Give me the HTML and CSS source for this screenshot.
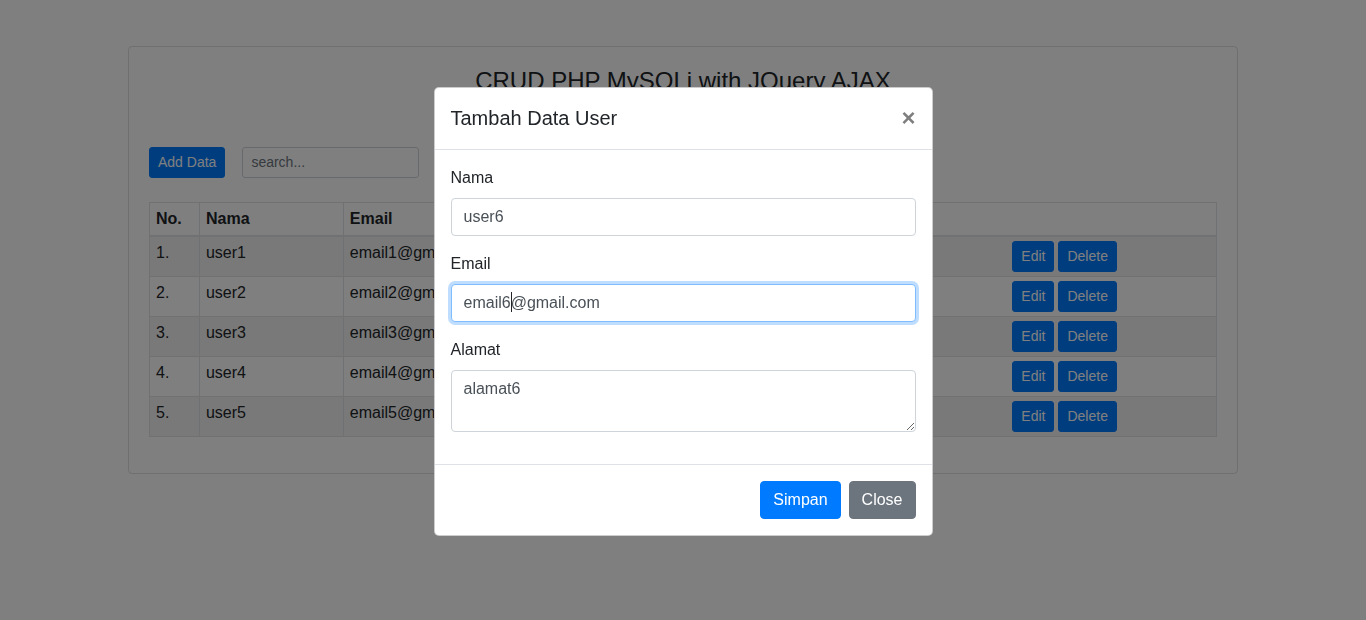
FILE: index.html
```html
<!DOCTYPE html>
<html lang="id">
<head>
    <meta charset="UTF-8">
    <meta name="viewport" content="width=device-width, initial-scale=1.0">
    <title>CRUD PHP MySQLi with JQuery AJAX</title>
    <link rel="stylesheet" href="styles.css">
</head>
<body>
    <div class="container">
        <div class="card">
            <h3 class="title">CRUD PHP MySQLi with JQuery AJAX</h3>

            <div class="toolbar">
                <button class="btn btn-primary btn-sm">Add Data</button>
                <input class="form-control form-control-sm search" type="text" placeholder="search...">
            </div>

            <table class="table">
                <thead>
                    <tr>
                        <th class="col-no">No.</th>
                        <th class="col-nama">Nama</th>
                        <th class="col-email">Email</th>
                        <th class="col-alamat">Alamat</th>
                        <th class="col-aksi"></th>
                    </tr>
                </thead>
                <tbody>
                    <tr><td>1.</td><td>user1</td><td>email1@gmail.com</td><td>alamat1</td><td class="col-aksi"><button class="btn btn-primary btn-sm">Edit</button><button class="btn btn-primary btn-sm">Delete</button></td></tr>
                    <tr><td>2.</td><td>user2</td><td>email2@gmail.com</td><td>alamat2</td><td class="col-aksi"><button class="btn btn-primary btn-sm">Edit</button><button class="btn btn-primary btn-sm">Delete</button></td></tr>
                    <tr><td>3.</td><td>user3</td><td>email3@gmail.com</td><td>alamat3</td><td class="col-aksi"><button class="btn btn-primary btn-sm">Edit</button><button class="btn btn-primary btn-sm">Delete</button></td></tr>
                    <tr><td>4.</td><td>user4</td><td>email4@gmail.com</td><td>alamat4</td><td class="col-aksi"><button class="btn btn-primary btn-sm">Edit</button><button class="btn btn-primary btn-sm">Delete</button></td></tr>
                    <tr><td>5.</td><td>user5</td><td>email5@gmail.com</td><td>alamat5</td><td class="col-aksi"><button class="btn btn-primary btn-sm">Edit</button><button class="btn btn-primary btn-sm">Delete</button></td></tr>
                </tbody>
            </table>
        </div>
    </div>

    <!-- Modal tambah data -->
    <div class="modal-backdrop">
        <div class="modal-content">
            <div class="modal-header">
                <h5 class="modal-title">Tambah Data User</h5>
                <button class="close">&times;</button>
            </div>
            <div class="modal-body">
                <div class="form-group">
                    <label>Nama</label>
                    <input class="form-control" type="text" value="user6">
                </div>
                <div class="form-group">
                    <label>Email</label>
                    <div class="form-control focus">email6<span class="caret"></span>@gmail.com</div>
                </div>
                <div class="form-group">
                    <label>Alamat</label>
                    <textarea class="form-control" rows="2">alamat6</textarea>
                </div>
            </div>
            <div class="modal-footer">
                <button class="btn btn-primary">Simpan</button>
                <button class="btn btn-secondary">Close</button>
            </div>
        </div>
    </div>
</body>
</html>
```

FILE: styles.css
```css
* {
    box-sizing: border-box;
}
body {
    margin: 0;
    font-family: "Liberation Sans", Arial, sans-serif;
    font-size: 16px;
    line-height: 1.5;
    color: #212529;
    background-color: #fff;
    overflow: hidden;
}
.container {
    width: 1140px;
    padding: 0 15px;
    margin: 0 auto;
    padding-top: 46px;
}
.card {
    border: 1px solid rgba(0, 0, 0, 0.125);
    border-radius: 4px;
    padding: 20px;
}
.title {
    margin: 0 0 51px;
    text-align: center;
    font-size: 24px;
    font-weight: 500;
    line-height: 1.2;
}
.toolbar {
    display: flex;
    align-items: center;
    gap: 16px;
    margin-bottom: 24px;
}

/* Buttons */
.btn {
    display: inline-block;
    font-family: inherit;
    font-size: 16px;
    line-height: 1.5;
    padding: 6px 12px;
    border: 1px solid transparent;
    border-radius: 4px;
    color: #fff;
    cursor: pointer;
}
.btn-sm {
    font-size: 14px;
    padding: 4px 8px;
    border-radius: 3px;
}
.btn-primary {
    background-color: #007bff;
    border-color: #007bff;
}
.btn-secondary {
    background-color: #6c757d;
    border-color: #6c757d;
}

/* Inputs */
.form-control {
    display: block;
    width: 100%;
    height: 38px;
    padding: 6px 12px;
    font-family: inherit;
    font-size: 16px;
    line-height: 1.5;
    color: #495057;
    background-color: #fff;
    border: 1px solid #ced4da;
    border-radius: 4px;
}
.form-control-sm {
    height: 31px;
    padding: 4px 8px;
    font-size: 14px;
    border-radius: 3px;
}
.form-control::placeholder {
    color: #6c757d;
}
.search {
    width: 177px;
    margin-left: 1px;
}
textarea.form-control {
    height: 62px;
    resize: vertical;
}
.form-control.focus {
    border-color: #80bdff;
    box-shadow: 0 0 0 3px rgba(0, 123, 255, 0.25);
    outline: none;
}
.caret {
    display: inline-block;
    width: 1px;
    height: 20px;
    margin-right: -1px;
    vertical-align: -4px;
    background-color: #212529;
}

/* Table */
.table {
    width: 100%;
    border-collapse: collapse;
    margin-bottom: 16px;
}
.table th,
.table td {
    border: 1px solid #dee2e6;
    padding: 4px 6px;
    text-align: left;
    vertical-align: top;
    height: 40px;
}
.table th {
    height: 34px;
    font-weight: 700;
    border-bottom-width: 2px;
}
.table tbody tr:nth-child(odd) {
    background-color: rgba(0, 0, 0, 0.05);
}
.table td.col-aksi {
    text-align: center;
}
.col-aksi .btn + .btn {
    margin-left: 4px;
}
.col-no { width: 50px; }
.col-nama { width: 144px; }
.col-email { width: 260px; }
.col-alamat { width: 310px; }
.col-aksi { width: 304px; }

/* Modal */
.modal-backdrop {
    position: fixed;
    inset: 0;
    background-color: rgba(0, 0, 0, 0.5);
    display: flex;
    justify-content: center;
    align-items: center;
}
.modal-content {
    width: 499px;
    margin-top: 2px;
    background-color: #fff;
    border: 1px solid rgba(0, 0, 0, 0.2);
    border-radius: 5px;
}
.modal-header {
    display: flex;
    justify-content: space-between;
    align-items: center;
    padding: 15px 16px 16px;
    border-bottom: 1px solid #dee2e6;
}
.modal-title {
    margin: 0;
    font-size: 20px;
    font-weight: 500;
    line-height: 30px;
}
.close {
    padding: 0;
    background: transparent;
    border: 0;
    font-family: inherit;
    font-size: 24px;
    font-weight: 700;
    line-height: 30px;
    color: #000;
    opacity: 0.5;
}
.modal-body {
    padding: 16px;
}
.form-group {
    margin-bottom: 16px;
}
.form-group label {
    display: block;
    margin-bottom: 8px;
}
.modal-footer {
    display: flex;
    justify-content: flex-end;
    gap: 8px;
    padding: 16px;
    border-top: 1px solid #dee2e6;
}
```
